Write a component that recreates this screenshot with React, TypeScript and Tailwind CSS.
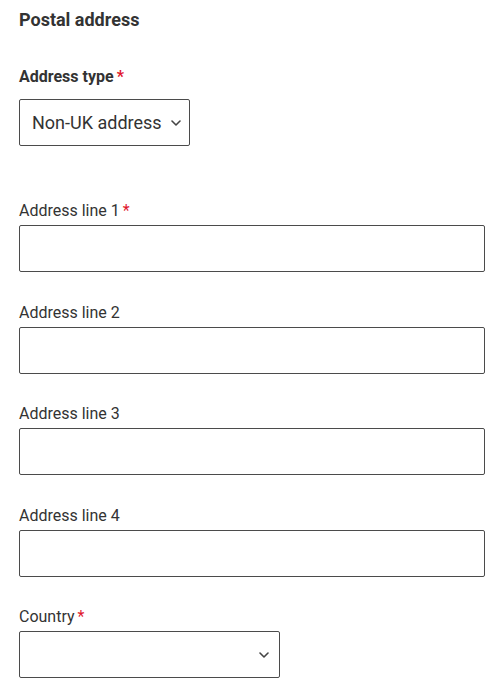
import React from 'react'

const font = { fontFamily: 'Roboto, "Liberation Sans", sans-serif' }

function Chevron() {
  return (
    <svg width="10" height="6" viewBox="0 0 10 6" className="shrink-0">
      <path d="M1 1l4 4 4-4" fill="none" stroke="#444" strokeWidth="1.6" strokeLinecap="round" strokeLinejoin="round" />
    </svg>
  )
}

function Req() {
  return <span className="text-[#e0182d] ml-[3px]">*</span>
}

function TextField({ label, required }: { label: string; required?: boolean }) {
  return (
    <div className="flex flex-col">
      <label className="text-[16px] leading-[20px] text-[#333]">
        {label}
        {required && <Req />}
      </label>
      <div className="mt-[4px] h-[47px] w-[466px] rounded-[2px] border border-[#4b4b4b] bg-white" />
    </div>
  )
}

export default function App() {
  return (
    <div className="min-h-[686px] bg-white pl-[19px] pt-[8px] text-[#333]" style={font}>
      <h2 className="text-[18px] font-bold leading-[24px] text-[#333]">Postal address</h2>

      <div className="mt-[35px] flex flex-col">
        <label className="text-[16px] font-bold leading-[20px]">
          Address type
          <Req />
        </label>
        <div className="mt-[12px] flex h-[47px] w-[171px] items-center justify-between rounded-[2px] border border-[#4b4b4b] pl-[12px] pr-[8px]">
          <span className="text-[18px] text-[#333]">Non-UK address</span>
          <Chevron />
        </div>
      </div>

      <div className="mt-[55px] flex flex-col gap-[30.5px]">
        <TextField label="Address line 1" required />
        <TextField label="Address line 2" />
        <TextField label="Address line 3" />
        <TextField label="Address line 4" />
        <div className="flex flex-col">
          <label className="text-[16px] leading-[20px]">
            Country
            <Req />
          </label>
          <div className="mt-[4px] flex h-[47px] w-[261px] items-center justify-end rounded-[2px] border border-[#4b4b4b] pr-[10px]">
            <Chevron />
          </div>
        </div>
      </div>
    </div>
  )
}
